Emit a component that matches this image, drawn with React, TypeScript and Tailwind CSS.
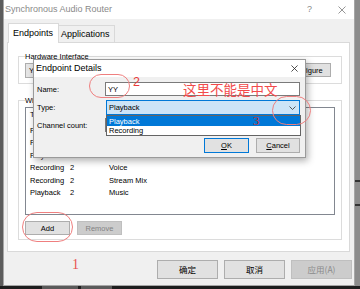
import React from 'react';

const rows = [
  ['Playback', '2', 'Speakers'],
  ['Playback', '2', 'Headphones'],
  ['Playback', '2', 'Game'],
  ['Recording', '2', 'Voice'],
  ['Recording', '2', 'Stream Mix'],
  ['Playback', '2', 'Music'],
];

function Cross({ className }: { className: string }) {
  return (
    <svg viewBox="0 0 8 8" className={className} fill="none" stroke="currentColor" strokeWidth="0.9">
      <path d="M0.5 0.5 L7.5 7.5 M7.5 0.5 L0.5 7.5" />
    </svg>
  );
}

export default function App() {
  return (
    <div className="relative w-[360px] h-[289px] overflow-hidden bg-[#1e1e1e] font-['Liberation_Sans',Arial,sans-serif] text-[7.5px] leading-[9px] text-black">
      <div className="flex h-[286px]">
        <div className="w-[3px] bg-[#5c5c5c]" />

        {/* main window */}
        <div className="w-[352px] flex flex-col bg-[#f0f0f0] border-x border-b border-[#a6a6a6]">
          <div className="h-[19px] shrink-0 bg-white flex items-center pl-[1px] text-[9px] text-[#8a8a8a]">
            <span>Synchronous Audio Router</span>
            <span className="ml-auto">?</span>
            <Cross className="ml-[26px] mr-[8px] w-[8px] h-[8px] text-[#8a8a8a]" />
          </div>

          {/* tabs */}
          <div className="mt-[4px] h-[20px] shrink-0 flex items-end pl-[4px] -mb-px relative z-10 text-[9px]">
            <div className="h-[20px] w-[51px] bg-white border border-b-0 border-[#d9d9d9] pl-[4px] flex items-center">Endpoints</div>
            <div className="h-[17px] w-[56px] mb-px border border-l-0 border-b-0 border-[#d9d9d9] flex items-center pl-[2px]">Applications</div>
          </div>

          {/* tab page */}
          <div className="ml-[3px] mr-[4px] h-[210px] shrink-0 bg-white border border-[#d9d9d9] flex flex-col">
            <fieldset className="mt-[9px] ml-[10px] mr-[7px] h-[32px] border border-[#dcdcdc] px-[6px]">
              <legend className="leading-[9px]">Hardware Interface</legend>
              <div className="mt-[2px] flex">
                <div className="w-[251px] h-[15px] border border-[#adadad] bg-[#e5e5e5] flex items-center pl-[3px]">Yamaha Steinberg USB ASIO</div>
                <div className="ml-[6px] w-[49px] h-[14px] border border-[#adadad] bg-[#e1e1e1] flex items-center justify-center">Configure</div>
              </div>
            </fieldset>

            <fieldset className="mt-[12px] ml-[10px] mr-[7px] h-[144px] border border-[#dcdcdc] px-[6px]">
              <legend className="leading-[9px]">Windows Endpoints</legend>
              <div className="mt-[2px] h-[108px] border border-[#828790] bg-white overflow-hidden pl-[4px]">
                <div className="h-[13px] mb-[3px] flex items-center">
                  <span className="w-[40px]">Type</span>
                  <span className="w-[39px]">Channels</span>
                  <span>Name</span>
                </div>
                {rows.map((r, i) => (
                  <div key={i} className="h-[12.5px] flex items-center">
                    <span className="w-[40px]">{r[0]}</span>
                    <span className="w-[39px]">{r[1]}</span>
                    <span>{r[2]}</span>
                  </div>
                ))}
              </div>
              <div className="mt-[6px] flex gap-[7px]">
                <div className="w-[45px] h-[14px] border border-[#adadad] bg-[#e1e1e1] flex items-center justify-center">Add</div>
                <div className="w-[45px] h-[14px] border border-[#bfbfbf] bg-[#cccccc] text-[#838383] flex items-center justify-center">Remove</div>
              </div>
            </fieldset>
          </div>

          {/* dialog buttons */}
          <div className="mt-[8px] flex justify-end gap-[6px] pr-[2px] font-['Noto_Sans_CJK_SC',sans-serif] text-[8.5px]">
            <div className="w-[61px] h-[19px] border border-[#adadad] bg-[#e1e1e1] flex items-center justify-center">确定</div>
            <div className="w-[61px] h-[19px] border border-[#adadad] bg-[#e1e1e1] flex items-center justify-center">取消</div>
            <div className="w-[61px] h-[19px] border border-[#bfbfbf] bg-[#cccccc] text-[#8a8a8a] flex items-center justify-center">应用(A)</div>
          </div>
        </div>

        <div className="w-[5px] bg-[#8c8c8c] flex flex-col">
          <div className="mt-[180px] h-[2px] bg-[#333]" />
          <div className="mt-[22px] h-[2px] bg-[#333]" />
        </div>
      </div>
      <div className="h-[3px] flex">
        <div className="ml-[42px] w-[36px] bg-[#5a5a5a]" />
        <div className="ml-[3px] w-[31px] bg-[#5a5a5a]" />
      </div>

      {/* Endpoint Details dialog */}
      <div className="absolute left-[33px] top-[59px] w-[273px] h-[99px] border border-[#9a9a9a] bg-[#f0f0f0] flex flex-col shadow-[2px_3px_7px_rgba(0,0,0,0.3)]">
        <div className="h-[17px] shrink-0 bg-white flex items-center pl-[2px] pr-[7px] text-[9px]">
          <span>Endpoint Details</span>
          <Cross className="ml-auto w-[7px] h-[7px] text-[#222]" />
        </div>
        <div className="flex-1 pt-[5px] pl-[3px] pr-[5px] flex flex-col">
          <div className="h-[14px] flex items-center">
            <span className="w-[68px]">Name:</span>
            <div className="flex-1 h-[14px] border border-[#7a7a7a] bg-white flex items-center pl-[2px]">YY</div>
          </div>
          <div className="mt-[4px] h-[15px] flex items-center">
            <span className="w-[69px]">Type:</span>
            <div className="flex-1 h-[15px] border border-[#0078d7] bg-[#cce4f7] flex items-center pl-[2px] pr-[3px]">
              <span>Playback</span>
              <svg viewBox="0 0 7 4" className="ml-auto w-[7px] h-[4px]" fill="none" stroke="#444" strokeWidth="0.9">
                <path d="M0.5 0.5 L3.5 3.5 L6.5 0.5" />
              </svg>
            </div>
          </div>
          <div className="mt-[3px] h-[14px] flex items-center">
            <span className="w-[68px]">Channel count:</span>
            <div className="w-[50px] h-[14px] border border-[#7a7a7a] bg-white" />
          </div>
          <div className="mt-[6px] flex justify-end gap-[7px]">
            <div className="w-[45px] h-[15px] border border-[#0078d7] bg-[#e1e1e1] flex items-center justify-center"><span className="underline">O</span>K</div>
            <div className="w-[44px] h-[15px] border border-[#adadad] bg-[#e1e1e1] flex items-center justify-center"><span className="underline">C</span>ancel</div>
          </div>
        </div>

        {/* open dropdown */}
        <div className="absolute left-[72px] top-[55px] w-[195px] h-[21px] border border-[#646464] bg-white flex flex-col">
          <div className="h-[10px] bg-[#0078d7] text-white flex items-center pl-[2px]">Playback</div>
          <div className="h-[9px] flex items-center pl-[2px]">Recording</div>
        </div>
      </div>

      {/* red annotations */}
      <div className="absolute left-[22px] top-[212px] w-[51px] h-[30px] rounded-full border border-[#ef7f7f]" />
      <div className="absolute left-[72px] top-[257px] font-['Liberation_Serif',serif] text-[14px] leading-[16px] text-[#e85050]">1</div>
      <div className="absolute left-[89px] top-[74px] w-[41px] h-[24px] rounded-full border border-[#ef7f7f]" />
      <div className="absolute left-[133px] top-[75px] text-[12.5px] leading-[14px] text-[#e83a3a]">2</div>
      <div className="absolute left-[183px] top-[81px] font-['Noto_Sans_CJK_SC',sans-serif] text-[13.5px] leading-[16px] text-[#f24b4b]">这里不能是中文</div>
      <div className="absolute left-[272px] top-[96px] w-[39px] h-[29px] rounded-full border border-[#ef7f7f]" />
      <div className="absolute left-[253px] top-[113px] font-['Liberation_Serif',serif] text-[13px] leading-[15px] text-[#c83030]">3</div>
    </div>
  );
}
